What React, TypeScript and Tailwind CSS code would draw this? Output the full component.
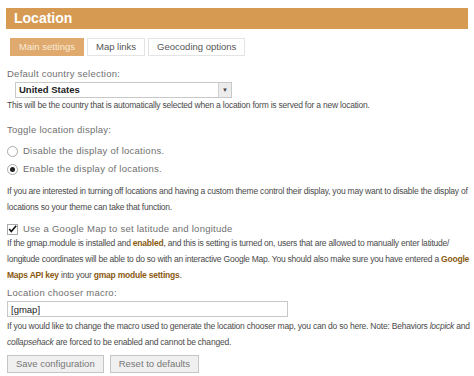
import { useState } from 'react'

const bold = 'font-bold text-[#8a5a12]'
const label = 'text-[9.5px] leading-[12px] text-[#707070] tracking-[0.25px]'
const help = 'text-[8.5px] text-[#4a4a4a] tracking-[-0.22px]'

export default function App() {
  const [display, setDisplay] = useState('enable')
  const [useMap, setUseMap] = useState(true)

  return (
    <div className="w-[474px] h-[376px] bg-white overflow-hidden font-['Liberation_Sans',Arial,sans-serif] text-[#333]">
      <div className="pt-2 px-1.5">
        <h1 className="h-[21px] bg-[#d69a52] pl-2 text-[14px] leading-[21px] font-bold text-white">Location</h1>
      </div>

      <div className="flex gap-[3px] pl-[10px] mt-[9px] text-[9.5px]">
        <button className="h-[18px] px-[8px] bg-[#e0aa6e] text-[#f8ead8] border border-[#e0aa6e]">Main settings</button>
        <button className="h-[18px] px-[8px] bg-white text-[#555] border border-[#e4e4e4]">Map links</button>
        <button className="h-[18px] px-[8px] bg-white text-[#555] border border-[#e4e4e4]">Geocoding options</button>
      </div>

      <div className="pl-[7px] pr-[4px]">
        <div className={`mt-[12px] ${label}`}>Default country selection:</div>
        <div className="ml-[8px] mt-[2px] w-[217px] h-[16px] flex items-center border border-[#c8c8c8] text-[9.5px] font-bold text-[#222] bg-white">
          <span className="flex-1 pl-[3px]">United States</span>
          <span className="w-[13px] h-[14px] flex items-center justify-center bg-[#ececec] border-l border-[#d0d0d0] text-[6px] text-[#444]">▼</span>
        </div>
        <p className={`mt-[2px] leading-[10px] ${help}`}>
          This will be the country that is automatically selected when a location form is served for a new location.
        </p>

        <div className={`mt-[14px] ${label}`}>Toggle location display:</div>
        <div className={`mt-[9px] flex flex-col gap-[6px] ${label}`}>
          {[
            ['disable', 'Disable the display of locations.'],
            ['enable', 'Enable the display of locations.'],
          ].map(([v, t]) => (
            <label key={v} className="flex items-center gap-[5px]" onClick={() => setDisplay(v)}>
              <span className="w-[11px] h-[11px] rounded-full border border-[#aaa] bg-white flex items-center justify-center">
                {display === v && <span className="w-[5px] h-[5px] rounded-full bg-[#222]" />}
              </span>
              {t}
            </label>
          ))}
        </div>
        <p className={`mt-[8px] leading-[16px] ${help}`}>
          If you are interested in turning off locations and having a custom theme control their display, you may want to disable the display of locations so your theme can take that function.
        </p>

        <label className={`mt-[8px] flex items-center gap-[5px] ${label}`} onClick={() => setUseMap(!useMap)}>
          <span className="w-[11px] h-[11px] border border-[#aaa] bg-white flex items-center justify-center">
            {useMap && (
              <svg width="11" height="10" viewBox="0 0 11 10">
                <path d="M1.5 5 L4 8 L10 1" fill="none" stroke="#111" strokeWidth="2" />
              </svg>
            )}
          </span>
          Use a Google Map to set latitude and longitude
        </label>
        <p className={`leading-[16px] ${help}`}>
          If the gmap.module is installed and <span className={bold}>enabled</span>, and this is setting is turned on, users that are allowed to manually enter latitude/ longitude coordinates will be able to do so with an interactive Google Map. You should also make sure you have entered a <span className={bold}>Google Maps API key</span> into your <span className={bold}>gmap module settings</span>.
        </p>

        <div className={`mt-[4px] ${label}`}>Location chooser macro:</div>
        <input
          defaultValue="[gmap]"
          className="block mt-[2px] w-[281px] h-[16px] border border-[#c8c8c8] px-[3px] text-[9.5px] text-[#222] outline-none"
        />
        <p className={`mt-[1px] leading-[16px] ${help}`}>
          If you would like to change the macro used to generate the location chooser map, you can do so here. Note: Behaviors <em>locpick</em> and <em>collapsehack</em> are forced to be enabled and cannot be changed.
        </p>

        <div className="mt-[5px] flex gap-[6px] text-[9.5px] text-[#777]">
          <button className="h-[18px] px-[8px] bg-[#f0f0f0] border border-[#c4c4c4]">Save configuration</button>
          <button className="h-[18px] px-[8px] bg-[#f0f0f0] border border-[#c4c4c4]">Reset to defaults</button>
        </div>
      </div>
    </div>
  )
}
